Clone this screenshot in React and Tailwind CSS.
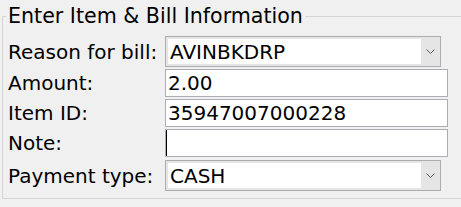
const font = { fontFamily: '"DejaVu Sans", Verdana, sans-serif' };

const Combo = ({ value }) => (
    <div className="flex h-[31px] w-[276px] border border-[#adadad] bg-[#e5e5e5] py-[2px] pl-[2px]">
        <div className="flex flex-1 items-center bg-white pl-[2px] text-[20px] text-black">{value}</div>
        <div className="flex w-[19px] items-center justify-center">
            <svg width="9" height="5" viewBox="0 0 9 5" className="text-[#5a5a5a]">
                <path d="M0.5 0.5 L4.5 4.5 L8.5 0.5" fill="none" stroke="currentColor" strokeWidth="1" />
            </svg>
        </div>
    </div>
);

const Field = ({ value, focused }) => (
    <div className="flex h-[28px] w-[283px] items-center border border-[#abadb3] bg-white pl-[2px] text-[20px] text-black">
        {focused && <span className="h-[26px] w-[1px] -ml-[2px] bg-black" />}
        {value}
    </div>
);

const rows = [
    { label: "Reason for bill:", el: <Combo value="AVINBKDRP" /> },
    { label: "Amount:", el: <Field value="2.00" /> },
    { label: "Item ID:", el: <Field value="35947007000228" /> },
    { label: "Note:", el: <Field value="" focused /> },
    { label: "Payment type:", el: <Combo value="CASH" /> },
];

export default function App() {
    return (
        <div className="h-[207px] w-[461px] overflow-hidden bg-[#f0f0f0]" style={font}>
            <fieldset className="ml-[2px] w-[470px] border border-r-0 border-[#d5d5d5] pb-[7px] pl-[5px] pr-0 pt-[4px]">
                <legend className="-ml-[2px] px-[2px] text-[20.6px] leading-[32px] text-black">
                    Enter Item &amp; Bill Information
                </legend>
                <div className="flex flex-col gap-[2px]">
                    {rows.map((row, i) => (
                        <div key={i} className={`flex items-center ${i === 4 ? "mt-[1px]" : ""}`}>
                            <span className="w-[157px] text-[20px] leading-[24px] text-black">{row.label}</span>
                            {row.el}
                        </div>
                    ))}
                </div>
            </fieldset>
        </div>
    );
}
